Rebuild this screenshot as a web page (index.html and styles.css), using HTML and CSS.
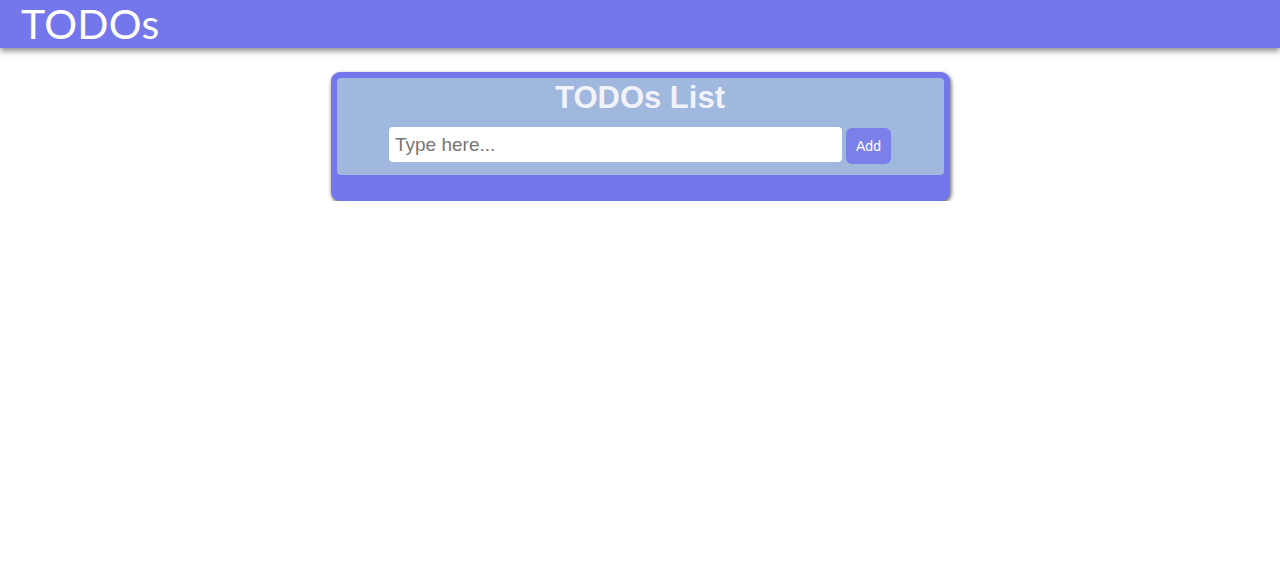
FILE: index.html
```html
<!DOCTYPE html>
<html>
<head>
<meta charset="utf-8">
<link rel="stylesheet" href="styles.css">
</head>
<body>
<header class="topbar"><span class="brand">TODOs</span></header>
<main class="page">
  <section class="card">
    <div class="card-inner">
      <h1 class="title">TODOs List</h1>
      <form class="add-form">
        <input class="add-input" type="text" placeholder="Type here...">
        <button class="add-btn" type="button">Add</button>
      </form>
    </div>
  </section>
</main>
</body>
</html>
```
FILE: styles.css
```css
html, body {
  margin: 0;
  padding: 0;
  background: #ffffff;
  font-family: "Liberation Sans", Arial, sans-serif;
}
.topbar {
  height: 48px;
  background: #7477ec;
  box-shadow: 0 3px 6px rgba(0, 0, 0, 0.45);
  display: flex;
  align-items: center;
  padding-left: 21px;
}
.brand {
  font-family: "Lato", "Open Sans", sans-serif;
  font-size: 41px;
  color: #ffffff;
  letter-spacing: 0.3px;
  line-height: 48px;
}
.page {
  display: flex;
  justify-content: center;
  padding-top: 24px;
}
.card {
  width: 607px;
  padding: 6px 6px 26px 6px;
  background: #7477ec;
  border-radius: 9px;
  box-shadow: 1px 2px 4px rgba(0, 0, 0, 0.65);
}
.card-inner {
  background: #a0b8de;
  border-radius: 4px;
  padding: 2px 0 11px 0;
  display: flex;
  flex-direction: column;
  align-items: center;
}
.title {
  margin: 0;
  font-size: 31px;
  line-height: 35px;
  font-weight: bold;
  color: #f1f2fa;
}
.add-form {
  margin: 12px 0 0 0;
  display: flex;
  align-items: flex-start;
  gap: 4px;
}
.add-input {
  width: 453px;
  height: 35px;
  box-sizing: border-box;
  border: none;
  border-radius: 4px;
  padding: 0 6px;
  font-family: "Liberation Sans", Arial, sans-serif;
  font-size: 19px;
  background: #ffffff;
  outline: none;
}
.add-input::placeholder {
  color: #767676;
}
.add-btn {
  width: 45px;
  height: 36px;
  margin-top: 1px;
  border: none;
  border-radius: 6px;
  background: #7b7fe9;
  color: #ffffff;
  font-family: "Liberation Sans", Arial, sans-serif;
  font-size: 14px;
  padding: 0;
}
```
